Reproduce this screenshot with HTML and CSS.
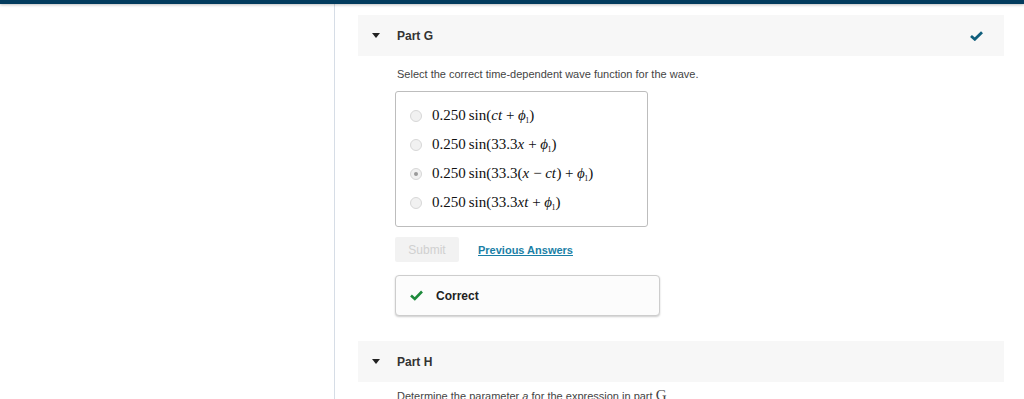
FILE: index.html
```html
<!DOCTYPE html>
<html>
<head>
<meta charset="utf-8">
<link rel="stylesheet" href="styles.css">
</head>
<body>
<div class="topbar"></div>
<div class="layout">
  <aside class="sidebar"></aside>
  <main class="content">
    <section class="part">
      <div class="part-head">
        <span class="caret"></span>
        <span class="part-title">Part G</span>
        <svg class="done" width="13" height="10" viewBox="0 0 13 10"><path d="M1 5 L4.8 8.3 L12 1.3" fill="none" stroke="#0f5e7c" stroke-width="2.8"/></svg>
      </div>
      <div class="part-body">
        <p class="prompt">Select the correct time-dependent wave function for the wave.</p>
        <div class="options">
          <label class="opt"><span class="radio"></span><span class="math">0.250<span class="fn">sin</span>(<i>ct</i><span class="op">+</span><i>ϕ</i><sub>1</sub>)</span></label>
          <label class="opt"><span class="radio"></span><span class="math">0.250<span class="fn">sin</span>(33.3<i>x</i><span class="op">+</span><i>ϕ</i><sub>1</sub>)</span></label>
          <label class="opt"><span class="radio on"></span><span class="math">0.250<span class="fn">sin</span>(33.3(<i>x</i><span class="op">−</span><i>ct</i>)<span class="op">+</span><i>ϕ</i><sub>1</sub>)</span></label>
          <label class="opt"><span class="radio"></span><span class="math">0.250<span class="fn">sin</span>(33.3<i>xt</i><span class="op">+</span><i>ϕ</i><sub>1</sub>)</span></label>
        </div>
        <div class="actions">
          <span class="submit">Submit</span>
          <a class="prev" href="#">Previous Answers</a>
        </div>
        <div class="result">
          <svg width="13" height="11" viewBox="0 0 13 11"><path d="M1 5.5 L4.8 9 L12 1.5" fill="none" stroke="#1e8a3c" stroke-width="2.6"/></svg>
          <span>Correct</span>
        </div>
      </div>
    </section>
    <section class="part">
      <div class="part-head">
        <span class="caret"></span>
        <span class="part-title">Part H</span>
      </div>
      <div class="part-body">
        <p class="prompt cut">Determine the parameter <i>a</i> for the expression in part <span class="mathc">G</span></p>
      </div>
    </section>
  </main>
</div>
</body>
</html>
```

FILE: styles.css
```css
html, body {
  margin: 0;
  padding: 0;
  background: #fff;
  font-family: "Liberation Sans", Arial, sans-serif;
  color: #333;
  height: 399px;
  overflow: hidden;
}
.topbar {
  height: 4px;
  background: #033c5e;
  box-shadow: 0 1px 3px rgba(0,0,0,0.25);
  position: relative;
  z-index: 2;
}
.layout {
  display: flex;
  height: 395px;
}
.sidebar {
  width: 334px;
  flex: none;
  border-right: 1px solid #d6dde6;
}
.content {
  flex: 1;
  padding: 11px 20px 0 23px;
}
.part-head {
  height: 41px;
  background: #f7f7f7;
  display: flex;
  align-items: center;
  padding: 0 21px 0 14px;
}
.caret {
  width: 0;
  height: 0;
  border-left: 4.5px solid transparent;
  border-right: 4.5px solid transparent;
  border-top: 5px solid #222;
  margin-right: 17px;
}
.part-title {
  font-size: 12px;
  font-weight: bold;
  color: #333;
  flex: 1;
}
.done { margin-top: 1px; }
.part-body {
  padding-left: 37px;
}
.prompt {
  margin: 0;
  padding: 11px 0 0 2px;
  font-size: 11px;
  color: #444;
  line-height: 14px;
}
.prompt.cut { padding-top: 6px; }
.mathc { font-family: "Liberation Serif", serif; font-size: 15px; }
.options {
  margin-top: 10px;
  width: 253px;
  height: 136px;
  border: 1px solid #bdbdbd;
  border-radius: 3px;
  box-sizing: border-box;
  padding: 14px 0 0 14px;
  display: flex;
  flex-direction: column;
  gap: 9px;
}
.opt {
  display: flex;
  align-items: center;
  height: 20px;
}
.radio {
  width: 10px;
  height: 10px;
  border-radius: 50%;
  border: 1px solid #d7d7d7;
  background: #f1f1f1;
  margin-right: 10px;
  position: relative;
  flex: none;
}
.radio.on::after {
  content: "";
  position: absolute;
  left: 3px;
  top: 3px;
  width: 4px;
  height: 4px;
  border-radius: 50%;
  background: #9a9a9a;
}
.math {
  font-family: "Liberation Serif", "DejaVu Serif", serif;
  font-size: 15px;
  color: #111;
  white-space: nowrap;
}
.math i { padding-right: 0.5px; }
.fn { margin-left: 3px; }
.op { margin: 0 3.5px; }
.math sub {
  font-size: 8px;
  vertical-align: -3px;
  margin-left: -1px;
}
.actions {
  margin-top: 10px;
  display: flex;
  align-items: center;
  gap: 19px;
}
.submit {
  width: 64px;
  height: 25px;
  background: #f2f2f2;
  border-radius: 2px;
  color: #d0d0d0;
  font-size: 12px;
  display: flex;
  align-items: center;
  justify-content: center;
}
.prev {
  font-size: 11px;
  font-weight: bold;
  color: #1a7fa6;
  text-decoration: underline;
}
.result {
  margin-top: 13px;
  width: 265px;
  height: 41px;
  box-sizing: border-box;
  border: 1px solid #cdcdcd;
  border-radius: 4px;
  box-shadow: 0 1px 2px rgba(0,0,0,0.2);
  background: #fcfcfc;
  display: flex;
  align-items: center;
  padding-left: 14px;
  gap: 13px;
  font-size: 12px;
  font-weight: bold;
  color: #222;
}
.part + .part { margin-top: 25px; }
```
